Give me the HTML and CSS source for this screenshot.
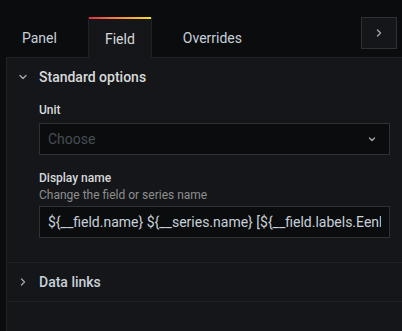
FILE: index.html
```html
<!DOCTYPE html>
<html>
<head>
<meta charset="utf-8">
<link rel="stylesheet" href="styles.css">
</head>
<body>
<div class="tabs">
  <div class="tab">Panel</div>
  <div class="tab active">Field</div>
  <div class="tab">Overrides</div>
  <button class="collapse-btn" aria-label="Collapse">
    <svg width="10" height="10" viewBox="0 0 10 10"><path d="M3.5 2 L6.5 5 L3.5 8" fill="none" stroke="#9fa7b3" stroke-width="1.4" stroke-linecap="round" stroke-linejoin="round"/></svg>
  </button>
</div>
<div class="panel">
  <div class="section open">
    <div class="section-header">
      <svg class="chev" width="10" height="10" viewBox="0 0 10 10"><path d="M2 3.5 L5 6.5 L8 3.5" fill="none" stroke="#9fa7b3" stroke-width="1.4" stroke-linecap="round" stroke-linejoin="round"/></svg>
      <span class="section-title">Standard options</span>
    </div>
    <div class="section-body">
      <div class="field">
        <div class="label">Unit</div>
        <div class="select">
          <span class="placeholder">Choose</span>
          <svg width="10" height="10" viewBox="0 0 10 10"><path d="M2.5 4 L5 6.5 L7.5 4" fill="none" stroke="#9fa7b3" stroke-width="1.4" stroke-linecap="round" stroke-linejoin="round"/></svg>
        </div>
      </div>
      <div class="field">
        <div class="label">Display name</div>
        <div class="desc">Change the field or series name</div>
        <div class="input"><span class="value">${__field.name} ${__series.name} [${__field.labels.Eenheid}]</span></div>
      </div>
    </div>
  </div>
  <div class="section">
    <div class="section-header">
      <svg class="chev" width="10" height="10" viewBox="0 0 10 10"><path d="M3.5 2 L6.5 5 L3.5 8" fill="none" stroke="#9fa7b3" stroke-width="1.4" stroke-linecap="round" stroke-linejoin="round"/></svg>
      <span class="section-title closed">Data links</span>
    </div>
  </div>
</div>
</body>
</html>
```
FILE: styles.css
```css
html, body {
  margin: 0;
  padding: 0;
  height: 100%;
  background: #0b0c0e;
  font-family: Roboto, "Liberation Sans", sans-serif;
  overflow: hidden;
}
body {
  display: flex;
  flex-direction: column;
}
.tabs {
  display: flex;
  align-items: flex-end;
  height: 57px;
  padding-left: 6px;
  padding-right: 5px;
  gap: 15px;
  box-sizing: border-box;
}
.tab {
  height: 41px;
  box-sizing: border-box;
  padding: 0 16px;
  display: flex;
  align-items: center;
  font-size: 14px;
  color: #c7d0d9;
  position: relative;
  top: 1px;
}
.tab.active {
  color: #d8d9da;
  border: 1px solid #202226;
  border-bottom: none;
  border-top: none;
  padding-top: 2px;
  background-image: linear-gradient(90deg, #e02f44 0%, #f57b3d 40%, #fade2a 100%);
  background-size: 100% 2px;
  background-repeat: no-repeat;
  background-color: #141619;
}
.collapse-btn {
  margin-left: auto;
  align-self: flex-start;
  margin-top: 17px;
  width: 36px;
  height: 32px;
  background: #141619;
  border: 1px solid #2c3235;
  display: flex;
  align-items: center;
  justify-content: center;
  padding: 0;
}
.panel {
  flex: 1;
  margin-left: 6px;
  background: #141619;
  border-top: 1px solid #202226;
  border-left: 1px solid #202226;
}
.section {
  border-bottom: 1px solid #202226;
}
.section-header {
  height: 38px;
  display: flex;
  align-items: center;
  padding-left: 11px;
}
.chev {
  margin-right: 11px;
}
.section-title {
  font-size: 14px;
  font-weight: 500;
  color: #d8d9da;
}
.section-title.closed {
  color: #c7d0d9;
}
.section-body {
  padding: 0 12px 24px 32px;
}
.field + .field {
  margin-top: 15px;
}
.label {
  font-size: 12px;
  font-weight: 500;
  color: #d8d9da;
  line-height: 16px;
  padding-top: 6px;
  margin-bottom: 5px;
}
.field + .field .label {
  padding-top: 0;
  margin-bottom: 1px;
}
.desc {
  font-size: 12px;
  color: #8e8e8e;
  line-height: 16px;
  margin-bottom: 3px;
}
.select, .input {
  height: 32px;
  box-sizing: border-box;
  background: #0b0c0e;
  border: 1px solid #2c3235;
  display: flex;
  align-items: center;
  padding: 0 12px 0 8px;
  font-size: 14px;
}
.select {
  justify-content: space-between;
}
.placeholder {
  color: #464c54;
}
.input {
  color: #c7d0d9;
  padding-right: 8px;
}
.value {
  display: block;
  white-space: nowrap;
  overflow: hidden;
  min-width: 0;
  flex: 1;
}
```
